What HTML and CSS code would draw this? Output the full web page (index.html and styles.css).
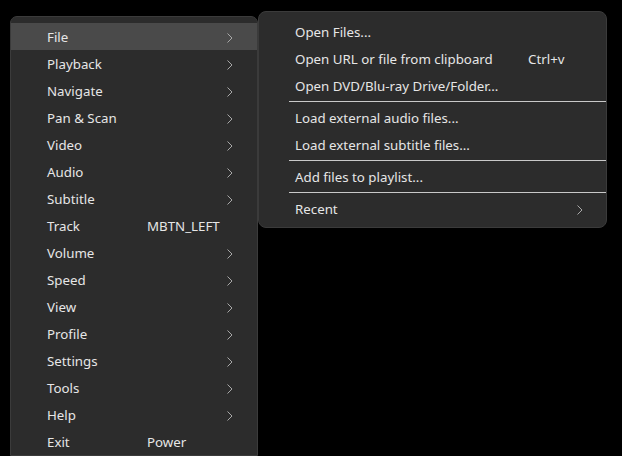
FILE: index.html
```html
<!DOCTYPE html>
<html>
<head>
<meta charset="utf-8">
<link rel="stylesheet" href="styles.css">
</head>
<body>
<div class="stage">
  <div class="menu main">
    <div class="item active"><span class="label">File</span><span class="key"></span><svg class="chev" viewBox="0 0 6 10"><polyline points="0.5,0.5 5,5 0.5,9.5"/></svg></div>
    <div class="item"><span class="label">Playback</span><span class="key"></span><svg class="chev" viewBox="0 0 6 10"><polyline points="0.5,0.5 5,5 0.5,9.5"/></svg></div>
    <div class="item"><span class="label">Navigate</span><span class="key"></span><svg class="chev" viewBox="0 0 6 10"><polyline points="0.5,0.5 5,5 0.5,9.5"/></svg></div>
    <div class="item"><span class="label">Pan &amp; Scan</span><span class="key"></span><svg class="chev" viewBox="0 0 6 10"><polyline points="0.5,0.5 5,5 0.5,9.5"/></svg></div>
    <div class="item"><span class="label">Video</span><span class="key"></span><svg class="chev" viewBox="0 0 6 10"><polyline points="0.5,0.5 5,5 0.5,9.5"/></svg></div>
    <div class="item"><span class="label">Audio</span><span class="key"></span><svg class="chev" viewBox="0 0 6 10"><polyline points="0.5,0.5 5,5 0.5,9.5"/></svg></div>
    <div class="item"><span class="label">Subtitle</span><span class="key"></span><svg class="chev" viewBox="0 0 6 10"><polyline points="0.5,0.5 5,5 0.5,9.5"/></svg></div>
    <div class="item"><span class="label">Track</span><span class="key">MBTN_LEFT</span><span></span></div>
    <div class="item"><span class="label">Volume</span><span class="key"></span><svg class="chev" viewBox="0 0 6 10"><polyline points="0.5,0.5 5,5 0.5,9.5"/></svg></div>
    <div class="item"><span class="label">Speed</span><span class="key"></span><svg class="chev" viewBox="0 0 6 10"><polyline points="0.5,0.5 5,5 0.5,9.5"/></svg></div>
    <div class="item"><span class="label">View</span><span class="key"></span><svg class="chev" viewBox="0 0 6 10"><polyline points="0.5,0.5 5,5 0.5,9.5"/></svg></div>
    <div class="item"><span class="label">Profile</span><span class="key"></span><svg class="chev" viewBox="0 0 6 10"><polyline points="0.5,0.5 5,5 0.5,9.5"/></svg></div>
    <div class="item"><span class="label">Settings</span><span class="key"></span><svg class="chev" viewBox="0 0 6 10"><polyline points="0.5,0.5 5,5 0.5,9.5"/></svg></div>
    <div class="item"><span class="label">Tools</span><span class="key"></span><svg class="chev" viewBox="0 0 6 10"><polyline points="0.5,0.5 5,5 0.5,9.5"/></svg></div>
    <div class="item"><span class="label">Help</span><span class="key"></span><svg class="chev" viewBox="0 0 6 10"><polyline points="0.5,0.5 5,5 0.5,9.5"/></svg></div>
    <div class="item"><span class="label">Exit</span><span class="key">Power</span><span></span></div>
  </div>
  <div class="menu sub">
    <div class="item"><span class="label">Open Files...</span><span class="key"></span><span></span></div>
    <div class="item"><span class="label">Open URL or file from clipboard</span><span class="key">Ctrl+v</span><span></span></div>
    <div class="item"><span class="label">Open DVD/Blu-ray Drive/Folder...</span><span class="key"></span><span></span></div>
    <div class="sep"></div>
    <div class="item"><span class="label">Load external audio files...</span><span class="key"></span><span></span></div>
    <div class="item"><span class="label">Load external subtitle files...</span><span class="key"></span><span></span></div>
    <div class="sep"></div>
    <div class="item"><span class="label">Add files to playlist...</span><span class="key"></span><span></span></div>
    <div class="sep"></div>
    <div class="item"><span class="label">Recent</span><span class="key"></span><svg class="chev" viewBox="0 0 6 10"><polyline points="0.5,0.5 5,5 0.5,9.5"/></svg></div>
  </div>
</div>
</body>
</html>
```
FILE: styles.css
```css
html, body {
  margin: 0;
  padding: 0;
  background: #000;
  height: 100%;
  overflow: hidden;
}
.stage {
  position: relative;
  width: 622px;
  height: 456px;
  font-family: "Noto Sans", "Open Sans", sans-serif;
  font-size: 13.3px;
  color: #e6e6e6;
}
.menu {
  background: #2c2c2c;
  border: 1px solid #3b3b3b;
  box-sizing: border-box;
}
.main {
  margin-left: 10px;
  position: relative;
  top: 16px;
  width: 248px;
  border-radius: 7px 7px 0 0;
  padding-top: 6px;
}
.item {
  display: grid;
  box-sizing: border-box;
  height: 27px;
  padding-top: 2px;
  align-items: center;
  line-height: 25px;
  white-space: nowrap;
}
.main .item {
  grid-template-columns: 100px 1fr 6px;
  padding-left: 36px;
  padding-right: 24px;
}
.main .item.active {
  background: #4a4a4a;
}
.sub {
  position: absolute;
  left: 258px;
  top: 11px;
  width: 349px;
  height: 217px;
  border-radius: 8px;
  padding: 6px 0 5px 0;
}
.sub .item {
  grid-template-columns: 233px 1fr 6px;
  padding-left: 36px;
  padding-right: 23px;
}
.sep {
  height: 1px;
  background: #c9c9c9;
  margin: 2px 0 2px 30px;
}
.chev {
  width: 6px;
  height: 10px;
  display: block;
}
.chev polyline {
  fill: none;
  stroke: #a8a8a8;
  stroke-width: 1;
}
.key {
  color: #e6e6e6;
}
```
